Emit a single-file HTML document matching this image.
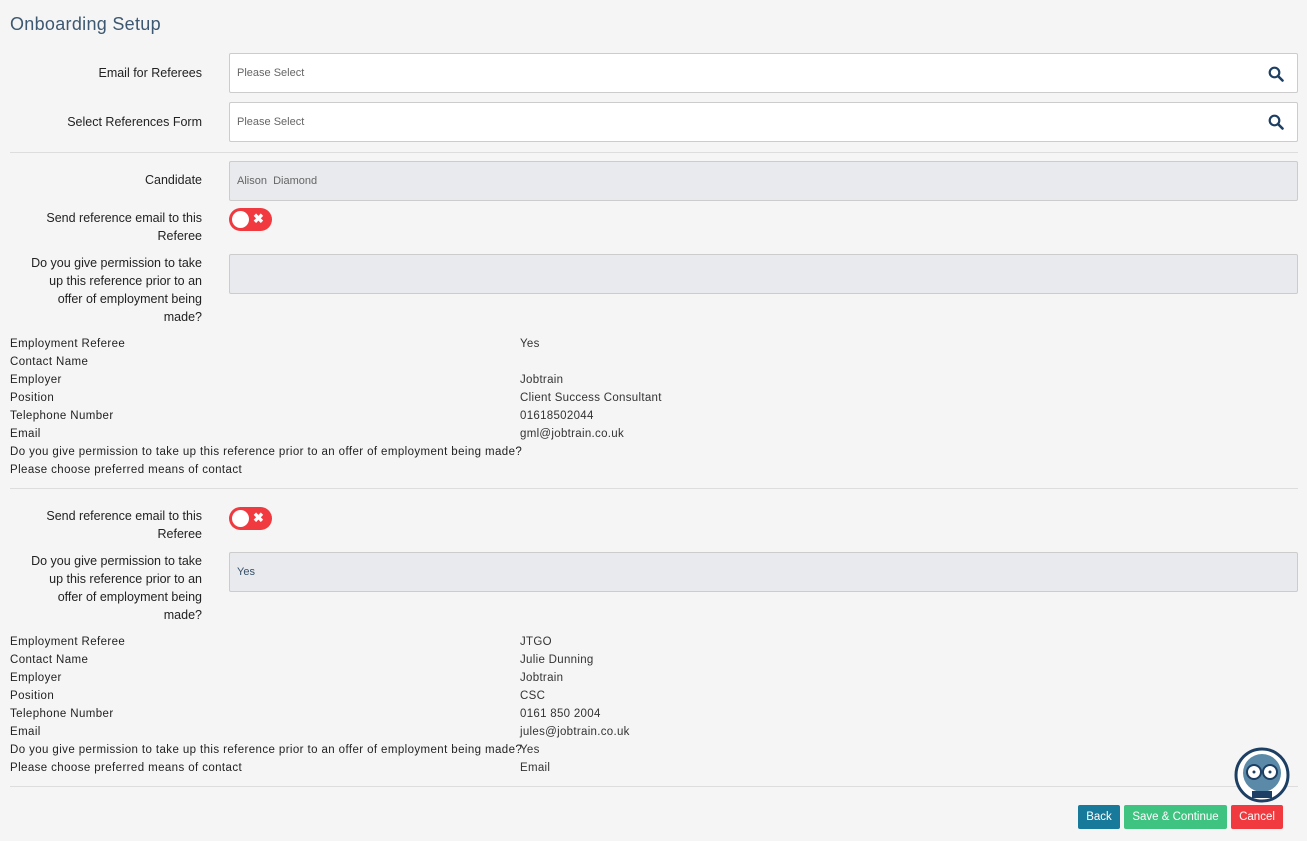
<!DOCTYPE html>
<html><head><meta charset="utf-8"><style>
*{box-sizing:border-box;margin:0;padding:0}
body{width:1307px;height:841px;background:#f5f5f5;font-family:"Liberation Sans",sans-serif;color:#222;position:relative;overflow:hidden}
.a{position:absolute}
.t{left:10px;top:14px;font-size:18px;color:#3d5870;letter-spacing:0.3px}
.lbl{position:absolute;right:1105px;font-size:12.5px;text-align:right;line-height:18px;color:#222;width:200px;white-space:nowrap}
.inp{position:absolute;left:229px;width:1069px;height:40px;border:1px solid #ccc;border-radius:2px;background:#fff;font-size:11px;color:#666;padding:13px 7px}
.ro{background:#e8eaed;border-color:#ccc}
.hr{position:absolute;left:10px;width:1288px;height:1px;background:#ddd}
.tg{position:absolute;left:229px;width:43px;height:23px;border-radius:12px;background:#f03a3f}
.tg:before{content:"";position:absolute;left:3px;top:3px;width:17px;height:17px;border-radius:50%;background:#fff}
.tg span{position:absolute;left:24px;top:3px;color:#fff;font-size:13px;font-weight:bold}
.row{position:absolute;left:10px;font-size:11.5px;letter-spacing:0.4px;color:#222;line-height:18px}
.val{position:absolute;left:520px;font-size:11.5px;letter-spacing:0.3px;color:#333;line-height:18px}
.btn{position:absolute;top:805px;height:24px;color:#fff;font-size:11.5px;text-align:center;line-height:24px;border-radius:2px}
svg.s{position:absolute;right:23px}
</style></head><body>
<div class="a t">Onboarding Setup</div>
<div class="lbl" style="top:64px">Email for Referees</div>
<div class="inp" style="top:53px">Please Select</div>
<svg class="s" width="16" height="16" viewBox="0 0 16 16" style="top:66px;left:1268px"><circle cx="6.5" cy="6.5" r="4.8" fill="none" stroke="#1d3f63" stroke-width="2.2"/><path d="M10 10l4.5 4.5" stroke="#1d3f63" stroke-width="2.6" stroke-linecap="round"/></svg>
<div class="lbl" style="top:113px">Select References Form</div>
<div class="inp" style="top:102px">Please Select</div>
<svg class="s" width="16" height="16" viewBox="0 0 16 16" style="top:114px;left:1268px"><circle cx="6.5" cy="6.5" r="4.8" fill="none" stroke="#1d3f63" stroke-width="2.2"/><path d="M10 10l4.5 4.5" stroke="#1d3f63" stroke-width="2.6" stroke-linecap="round"/></svg>
<div class="hr" style="top:152px"></div>
<div class="lbl" style="top:171px">Candidate</div>
<div class="inp ro" style="top:161px">Alison&nbsp; Diamond</div>
<div class="lbl" style="top:209px">Send reference email to this<br>Referee</div>
<div class="tg" style="top:208px"><span>✖</span></div>
<div class="lbl" style="top:254px">Do you give permission to take<br>up this reference prior to an<br>offer of employment being<br>made?</div>
<div class="inp ro" style="top:254px"></div>
<div class="row" style="top:335px">Employment Referee<br>Contact Name<br>Employer<br>Position<br>Telephone Number<br>Email<br>Do you give permission to take up this reference prior to an offer of employment being made?<br>Please choose preferred means of contact</div>
<div class="val" style="top:335px">Yes<br>&nbsp;<br>Jobtrain<br>Client Success Consultant<br>01618502044<br>gml@jobtrain.co.uk</div>
<div class="hr" style="top:488px"></div>
<div class="lbl" style="top:507px">Send reference email to this<br>Referee</div>
<div class="tg" style="top:507px"><span>✖</span></div>
<div class="lbl" style="top:552px">Do you give permission to take<br>up this reference prior to an<br>offer of employment being<br>made?</div>
<div class="inp ro" style="top:552px;color:#35506a">Yes</div>
<div class="row" style="top:633px">Employment Referee<br>Contact Name<br>Employer<br>Position<br>Telephone Number<br>Email<br>Do you give permission to take up this reference prior to an offer of employment being made?<br>Please choose preferred means of contact</div>
<div class="val" style="top:633px">JTGO<br>Julie Dunning<br>Jobtrain<br>CSC<br>0161 850 2004<br>jules@jobtrain.co.uk<br>Yes<br>Email</div>
<div class="hr" style="top:786px"></div>
<svg class="a" style="left:1234px;top:747px" width="58" height="56" viewBox="0 0 58 56"><circle cx="28" cy="28" r="26" fill="#fff" stroke="#1d3f63" stroke-width="3"/><circle cx="28" cy="26" r="19" fill="#5a8aa8"/><circle cx="20" cy="25" r="7" fill="#fff" stroke="#1d3f63" stroke-width="2"/><circle cx="36" cy="25" r="7" fill="#fff" stroke="#1d3f63" stroke-width="2"/><circle cx="20" cy="25" r="1.5" fill="#1d3f63"/><circle cx="36" cy="25" r="1.5" fill="#1d3f63"/><rect x="18" y="44" width="20" height="7" fill="#1d3f63"/></svg>
<div class="btn" style="left:1078px;width:42px;background:#187a9b">Back</div>
<div class="btn" style="left:1124px;width:103px;background:#3fc380">Save &amp; Continue</div>
<div class="btn" style="left:1231px;width:52px;background:#f03a3f">Cancel</div>
</body></html>
